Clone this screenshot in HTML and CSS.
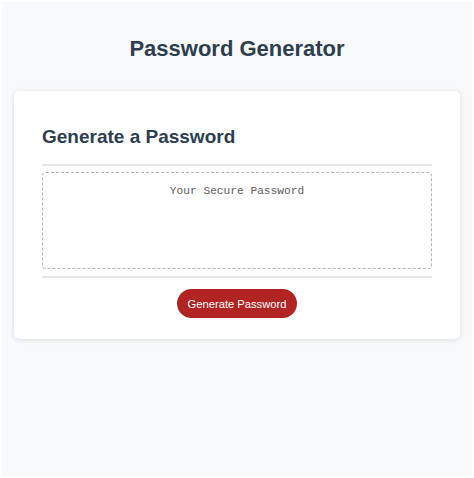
FILE: index.html
```html
<!DOCTYPE html>
<html lang="en">
<head>
    <meta charset="UTF-8">
    <meta name="viewport" content="width=device-width, initial-scale=1.0">
    <title>Password Generator</title>
    <link rel="stylesheet" href="styles.css">
</head>
<body>

    <div class="wrapper">
        <header>
            <h1>Password Generator</h1>
        </header>

        <div class="card">
            <div class="card-header">
                <h2>Generate a Password</h2>
            </div>
            <div class="card-body">
                <textarea readonly id="password" placeholder="Your Secure Password" aria-label="Generated Password"></textarea>
            </div>
            <div class="card-footer">
                <button id="generate" class="btn">Generate Password</button>
            </div>
        </div>
    </div>

</body>
</html>
```

FILE: styles.css
```css
html {
    background-color: #fff;
}

body {
    font-family: "Liberation Sans", Arial, sans-serif;
    background-color: #f8f9fa;
    margin: 2px;
    min-height: calc(100vh - 4px);
}

.wrapper {
    padding: 34px 12px 20px 12px;
}

header {
    text-align: center;
    margin-bottom: 29px;
}

h1 {
    font-size: 22px;
    line-height: 26px;
    color: #2c3e50;
    margin: 0;
}

.card {
    background-color: #fff;
    border-radius: 5px;
    box-shadow: 0 1px 5px rgba(0, 0, 0, 0.12);
    padding: 35px 28px 21px 28px;
}

h2 {
    font-size: 19px;
    line-height: 22px;
    color: #2c3e50;
    margin: 0;
    padding-bottom: 16px;
    border-bottom: 2px solid #e7e7e7;
}

.card-body {
    padding: 6px 0 7px 0;
    border-bottom: 2px solid #e7e7e7;
}

textarea {
    display: block;
    width: 100%;
    height: 97px;
    box-sizing: border-box;
    resize: none;
    border: 1px dashed #b5b5b5;
    border-radius: 4px;
    padding: 12px 10px 10px 10px;
    font-family: "Liberation Mono", "Courier New", monospace;
    font-size: 11.2px;
    text-align: center;
    color: #555;
    background-color: #fff;
}

textarea::placeholder {
    color: #606060;
}

textarea:focus {
    outline: none;
}

.card-footer {
    text-align: center;
    padding-top: 11px;
}

.btn {
    font-family: "Liberation Sans", Arial, sans-serif;
    font-size: 11.2px;
    color: #fff;
    background-color: #b22424;
    border: none;
    border-radius: 16px;
    padding: 8px 11px;
    height: 29px;
    cursor: pointer;
}

.btn:hover {
    background-color: #9b1d1d;
}
```
